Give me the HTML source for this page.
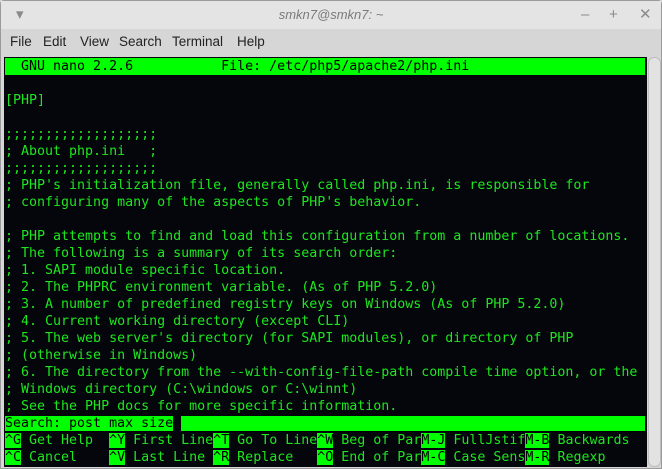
<!DOCTYPE html>
<html><head><meta charset="utf-8"><style>
*{margin:0;padding:0;box-sizing:border-box}
body{width:662px;height:469px;background:#d6d6d6;position:relative;overflow:hidden;font-family:"Liberation Sans",sans-serif}
.win{position:absolute;left:0;top:0;width:662px;height:469px;border:1px solid #9a9a9a;border-radius:4px 4px 0 0;background:#d6d6d6}
.title{position:absolute;left:0;top:0;width:660px;height:28px;background:#e4e4e4;text-align:center;font-style:italic;color:#7a7a7a;font-size:13px;line-height:28px}
.ctl{position:absolute;top:0;line-height:28px;color:#8a8a8a;font-size:15px;font-style:normal}
.menu{position:absolute;left:0;top:28px;height:26px;width:660px;line-height:26px;font-size:13.5px;color:#222}
.menu span{position:absolute}
.term{position:absolute;left:3px;top:56px;width:643px;height:410px;background:#04060c}
.t{position:absolute;left:1px;top:1px;width:640px;font-family:"DejaVu Sans Mono",monospace;font-size:13.3px;line-height:17px;color:#1ee61e;white-space:pre;overflow:hidden}
.r{height:17px;overflow:hidden}
.g{background:#00ff00;color:#000}
.sb{position:absolute;left:647px;top:56px;width:13px;height:410px;background:#e2e2e2;border:1px solid #bdbdbd;border-radius:6px}
</style></head><body><div class="win">
<div class="title">smkn7@smkn7: ~<span class="ctl" style="left:15px">▾</span><span class="ctl" style="left:580px">–</span><span class="ctl" style="left:608px">+</span><span class="ctl" style="left:638px">✕</span></div>
<div class="menu"><span style="left:9px">File</span><span style="left:42px">Edit</span><span style="left:79px">View</span><span style="left:118px">Search</span><span style="left:171px">Terminal</span><span style="left:236px">Help</span></div>
<div class="term"><div class="t"><div class="r g">  GNU nano 2.2.6           File: /etc/php5/apache2/php.ini                      </div><div class="r"> </div><div class="r">[PHP]</div><div class="r"> </div><div class="r">;;;;;;;;;;;;;;;;;;;</div><div class="r">; About php.ini   ;</div><div class="r">;;;;;;;;;;;;;;;;;;;</div><div class="r">; PHP's initialization file, generally called php.ini, is responsible for</div><div class="r">; configuring many of the aspects of PHP's behavior.</div><div class="r"> </div><div class="r">; PHP attempts to find and load this configuration from a number of locations.</div><div class="r">; The following is a summary of its search order:</div><div class="r">; 1. SAPI module specific location.</div><div class="r">; 2. The PHPRC environment variable. (As of PHP 5.2.0)</div><div class="r">; 3. A number of predefined registry keys on Windows (As of PHP 5.2.0)</div><div class="r">; 4. Current working directory (except CLI)</div><div class="r">; 5. The web server's directory (for SAPI modules), or directory of PHP</div><div class="r">; (otherwise in Windows)</div><div class="r">; 6. The directory from the --with-config-file-path compile time option, or the</div><div class="r">; Windows directory (C:\windows or C:\winnt)</div><div class="r">; See the PHP docs for more specific information.</div><div class="r"><span class="g">Search: post max size</span> <span class="g">                                                              </span></div><div class="r"><span class="g">^G</span> Get Help  <span class="g">^Y</span> First Line<span class="g">^T</span> Go To Line<span class="g">^W</span> Beg of Par<span class="g">M-J</span> FullJstif<span class="g">M-B</span> Backwards</div><div class="r"><span class="g">^C</span> Cancel    <span class="g">^V</span> Last Line <span class="g">^R</span> Replace   <span class="g">^O</span> End of Par<span class="g">M-C</span> Case Sens<span class="g">M-R</span> Regexp</div></div></div>
<div class="sb"></div>
</div></body></html>
